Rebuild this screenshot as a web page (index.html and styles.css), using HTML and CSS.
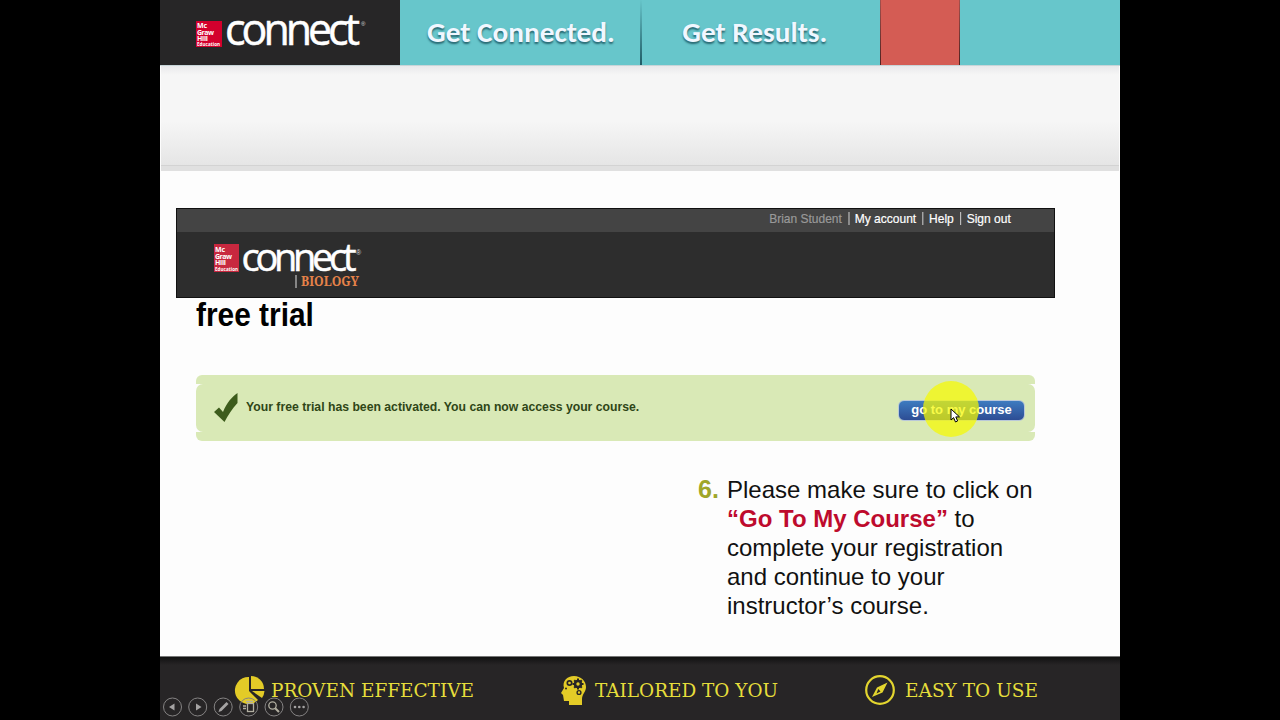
FILE: index.html
```html
<!DOCTYPE html>
<html lang="en">
  <head>
    <meta charset="UTF-8" />
    <meta name="viewport" content="width=device-width, initial-scale=1.0" />
    <title>Connect - Free Trial</title>
    <link rel="stylesheet" href="styles.css">
  </head>
  <body>
    <div class="slide">
      <header class="top-bar">
        <div class="top-logo">
          <svg width="240" height="65" viewBox="0 0 240 65">
            <rect x="36" y="21" width="26" height="26" fill="#d3002d" />
            <g class="badge-text">
              <text x="37" y="28" textLength="10">Mc</text>
              <text x="37" y="34.5" textLength="17">Graw</text>
              <text x="37" y="41" textLength="11">Hill</text>
              <text class="badge-small" x="37" y="46" textLength="23">Education</text>
            </g>
            <text class="wordmark" x="65" y="45" font-size="43" textLength="135">connect</text>
            <text class="reg" x="201" y="26" font-size="6">®</text>
          </svg>
        </div>
        <div class="tab"><span class="tab-connected">Get Connected.</span></div>
        <div class="tab tab-line"><span class="tab-results">Get Results.</span></div>
        <div class="red-block"></div>
        <div class="teal-block"></div>
      </header>
      <div class="band"></div>

      <main class="content">
        <div class="app-header">
          <nav class="account-bar">
            <div class="account-links">
              <span class="user-name">Brian Student</span>
              <span>My account</span>
              <span>Help</span>
              <span>Sign out</span>
            </div>
          </nav>
          <svg class="app-logo" width="240" height="64" viewBox="0 0 240 64">
            <rect x="38" y="12" width="25" height="28" fill="#c8283f" />
            <g class="badge-text">
              <text x="39" y="19.5" textLength="10">Mc</text>
              <text x="39" y="26.5" textLength="17">Graw</text>
              <text x="39" y="33" textLength="11">Hill</text>
              <text class="badge-small" x="39" y="38.5" textLength="23">Education</text>
            </g>
            <text class="wordmark" x="65.500" y="39" font-size="38" textLength="115">connect</text>
            <text class="reg" x="180" y="23" font-size="7">®</text>
            <rect x="119.500" y="43" width="1" height="13" fill="#ddd" />
            <text class="subject" x="125" y="53.500" textLength="58" lengthAdjust="spacingAndGlyphs">BIOLOGY</text>
          </svg>
        </div>

        <h1>free trial</h1>

        <div class="alert">
          <div class="alert-top"></div>
          <div class="alert-body">
            <svg class="check" width="25" height="30" viewBox="0 0 25 30">
              <path d="M0 19 L5 14.500 L9 19 C13 9 18 4 23.500 0 L23.500 10 C18 16 14 22 10.500 29 Z" fill="#3d5c1c" />
            </svg>
            <p class="alert-text">Your free trial has been activated. You can now access your course.</p>
            <div class="course-button">
              <span>go to my course</span>
              <div class="highlight"></div>
              <svg class="cursor" width="11" height="15" viewBox="0 0 11 15">
                <path d="M1 1 V12 L3.600 9.600 L5.500 14 L7.600 13 L5.800 8.900 H9.500 Z" fill="#fff" stroke="#000" />
              </svg>
            </div>
          </div>
          <div class="alert-bottom"></div>
        </div>

        <div class="step">
          <span class="step-number">6.</span>
          <p class="step-text">
            Please make sure to click on<br />
            <strong>“Go To My Course”</strong> to<br />
            complete your registration<br />
            and continue to your<br />
            instructor’s course.
          </p>
        </div>
      </main>

      <footer class="bottom-bar">
        <div class="feature feature-proven">
          <svg width="30" height="30" viewBox="0 0 30 30">
            <path d="M13 16 V2 A13.500 13.500 0 1 0 22 25 Z" fill="#e3cb27" />
            <path d="M15 14 V1 A13 13 0 0 1 28 14 Z" fill="#e3cb27" />
            <path d="M16 16 H28.500 A14 14 0 0 1 26 23 Z" fill="#e3cb27" />
          </svg>
          <svg width="206" height="30">
            <text x="1" y="22" textLength="203" lengthAdjust="spacingAndGlyphs">PROVEN EFFECTIVE</text>
          </svg>
        </div>
        <div class="feature feature-tailored">
          <svg width="26" height="30" viewBox="0 0 26 30">
            <path d="M8 30 V26 H3 L2 20 L0 18 L3 13 C1 6 6 1 13 1 C20 1 25 6 25 12 C25 17 21 19 21 24 V30 Z" fill="#e3cb27" />
            <g fill="none" stroke="#272526">
              <circle cx="8.500" cy="8" r="2.200" stroke-width="1.700" />
              <circle cx="17" cy="9" r="3" stroke-width="2.600" />
              <path d="M17 3.500 V5.500 M17 12.500 V14.500 M11.500 9 H13.500 M20.500 9 H22.500 M13.200 5.200 L14.500 6.500 M20.800 5.200 L19.500 6.500 M13.200 12.800 L14.500 11.500 M20.800 12.800 L19.500 11.500" stroke-width="2" />
              <circle cx="18" cy="17.500" r="1.900" stroke-width="1.400" />
            </g>
            <circle cx="5" cy="13.500" r="1" fill="#272526" />
          </svg>
          <svg width="186" height="30">
            <text x="1" y="22" textLength="183" lengthAdjust="spacingAndGlyphs">TAILORED TO YOU</text>
          </svg>
        </div>
        <div class="feature feature-easy">
          <svg width="30" height="30" viewBox="0 0 30 30">
            <circle cx="15" cy="15" r="13.800" fill="none" stroke="#e3d52f" stroke-width="2.200" />
            <path fill-rule="evenodd" d="M22.500 7.500 L17.500 17.500 L7 22 L12 12.500 Z M13.300 14 L11.500 18.500 L15.500 16.500 Z" fill="#e3d52f" />
          </svg>
          <svg width="136" height="30">
            <text x="1" y="22" textLength="133" lengthAdjust="spacingAndGlyphs">EASY TO USE</text>
          </svg>
        </div>

        <!-- slideshow controls -->
        <svg class="controls" width="148" height="22" viewBox="0 0 148 22">
          <g fill="none" stroke="#858383" stroke-width="1">
            <circle cx="12.500" cy="11" r="9" />
            <circle cx="37.700" cy="11" r="9" />
            <circle cx="63.200" cy="11" r="9" />
            <circle cx="88.700" cy="11" r="9" />
            <circle cx="114" cy="11" r="9" />
            <circle cx="139.300" cy="11" r="9" />
          </g>
          <g fill="#a5a3a3">
            <path d="M14.500 7.500 V14.500 L9 11 Z" />
            <path d="M36 7.500 V14.500 L41.500 11 Z" />
            <path d="M58.500 16 L59.500 13 L66.500 6 L68.500 8 L61.500 15 Z" />
            <circle cx="135" cy="11" r="1.300" />
            <circle cx="139.300" cy="11" r="1.300" />
            <circle cx="143.600" cy="11" r="1.300" />
          </g>
          <g fill="none" stroke="#b2afa1" stroke-width="1.300">
            <rect x="87.500" y="7.500" width="6" height="8" />
            <path d="M83 10 H86 M83 12.500 H86 M86 5.500 H93" />
            <circle cx="112.500" cy="9.500" r="3.700" />
            <path d="M115.200 12.200 L119 16" stroke-width="2" />
          </g>
        </svg>
      </footer>
    </div>
  </body>
</html>
```

FILE: styles.css
```css
body {
  margin: 0;
  background-color: #000;
  font-family: "Liberation Sans", Arial, sans-serif;
}
svg {
  display: block;
  flex-shrink: 0;
  overflow: visible;
}
.slide {
  width: 960px;
  height: 720px;
  margin: 0 auto;
  background-color: #fdfdfd;
  display: flex;
  flex-direction: column;
  overflow: hidden;
}
.top-bar {
  display: flex;
  height: 65px;
  flex-shrink: 0;
  border-bottom: 1px solid #c7d5d8;
}
.top-logo {
  width: 240px;
  background-color: #272627;
}
.badge-text {
  font-family: "Open Sans", sans-serif;
  font-size: 7px;
  font-weight: bold;
  fill: #fff;
}
.badge-small {
  font-size: 4.5px;
}
.wordmark {
  font-family: "Open Sans", sans-serif;
  fill: #fff;
  stroke: #fff;
  stroke-width: 0.5px;
}
.reg {
  fill: #ddd;
}
.subject {
  font-family: "Noto Serif", "Liberation Serif", serif;
  font-size: 14.5px;
  font-weight: bold;
  fill: #e58249;
}
.tab {
  width: 240px;
  background-color: #67c6cb;
  color: #f0f7ff;
  font-family: Carlito, Lato, sans-serif;
  font-size: 29px;
  font-weight: bold;
  line-height: 65px;
  text-align: center;
  text-shadow: 0 2px 2px #26656f;
  white-space: nowrap;
}
.tab span {
  display: inline-block;
}
.tab-connected {
  transform: translateX(1px) scaleX(1.01);
}
.tab-results {
  transform: translateX(-6px) scaleX(1.01);
}
.tab-line {
  box-sizing: border-box;
  border-left: 2px solid;
  border-image: linear-gradient(#67c6cb, #1f5a64) 1;
}
.red-block {
  box-sizing: border-box;
  width: 80px;
  background-color: #d45c54;
  border: solid;
  border-width: 0 1px;
  border-image: linear-gradient(#a5514d, #4d211f) 1;
}
.teal-block {
  width: 160px;
  background-color: #67c6cb;
}
.band {
  height: 105px;
  box-sizing: border-box;
  flex-shrink: 0;
  margin: 0 1px;
  background: linear-gradient(#e9e9eb 0, #f6f6f6 9px, #f6f6f6 55px, #e5e5e5 100%);
  border-bottom: 5px solid #e0e0e0;
  box-shadow: inset 0 -1px #d3d3d3;
}
.content {
  flex: 1;
  padding: 37px 0 0 16px;
}
.app-header {
  box-sizing: border-box;
  width: 879px;
  height: 90px;
  background-color: #2d2d2d;
  border: 1px solid #111;
}
.account-bar {
  display: flex;
  justify-content: flex-end;
  height: 23px;
  padding-right: 43px;
  background-color: #444;
}
.app-logo {
  margin-left: -1px;
}
.account-links {
  display: flex;
  align-items: center;
  height: 19px;
  color: #fff;
  font-size: 13px;
  line-height: 13px;
  transform: scaleX(0.923);
  transform-origin: right;
}
.account-links span {
  padding: 0 7px 0 6px;
  border-left: 1px solid #ddd;
  -webkit-text-stroke: 0.2px;
}
.account-links span:last-child {
  padding-right: 0;
}
.account-links .user-name {
  color: #999;
  border-left: none;
}
h1 {
  width: max-content;
  margin: 0 0 0 20px;
  font-size: 33px;
  line-height: 34px;
  transform: scaleX(0.905);
  transform-origin: left;
}
.alert {
  width: 839px;
  margin: 43px 0 0 20px;
}
.alert-top,
.alert-bottom {
  height: 9px;
  background-color: #d9e9b6;
}
.alert-top {
  border-radius: 6px 6px 0 0;
}
.alert-bottom {
  border-radius: 0 0 6px 6px;
}
.alert-body {
  box-sizing: border-box;
  height: 48px;
  padding: 0 10px 0 18px;
  display: flex;
  align-items: center;
  background-color: #d9e9b6;
  border-radius: 7px;
}
.alert-text {
  flex: 1;
  margin: -3px 0 0 7px;
  color: #2f4617;
  font-size: 13px;
  font-weight: bold;
  white-space: nowrap;
  transform: scaleX(0.94);
  transform-origin: left;
}
.course-button {
  position: relative;
  box-sizing: border-box;
  width: 127px;
  height: 21px;
  margin-top: 4px;
  border: 1px solid #b9c8d9;
  border-radius: 6px;
  background: linear-gradient(#3e7bc0, #2d4d94);
  color: #fff;
  font-size: 13px;
  font-weight: bold;
  line-height: 17px;
  text-align: center;
}
/* pointer spotlight over the button */
.highlight {
  position: absolute;
  left: 24px;
  top: -20px;
  width: 56px;
  height: 56px;
  border-radius: 50%;
  background-color: #f5f900;
  opacity: 0.72;
}
.cursor {
  position: absolute;
  left: 51px;
  top: 7px;
}
.step {
  display: flex;
  margin: 34px 0 0 522px;
  font-size: 24px;
  line-height: 29px;
}
.step-number {
  width: 29px;
  flex-shrink: 0;
  color: #9fa629;
  font-size: 25px;
  font-weight: bold;
}
.step-text {
  margin: 0;
  color: #111;
  white-space: nowrap;
}
.step-text strong {
  color: #be0b2d;
}
.bottom-bar {
  position: relative;
  box-sizing: border-box;
  height: 64px;
  flex-shrink: 0;
  display: flex;
  padding: 18px 0 0 76px;
  background: linear-gradient(#111 0, #272526 8px);
  border-top: 1px solid #777;
}
.feature {
  display: flex;
  gap: 4px;
}
.feature-tailored {
  margin-left: 85px;
  gap: 7px;
}
.feature-easy {
  margin-left: 85px;
  gap: 9px;
}
.feature text {
  font-family: "DejaVu Serif", serif;
  font-size: 19px;
  fill: #e6de3b;
}
.controls {
  position: absolute;
  left: 0;
  top: 39px;
}
```
